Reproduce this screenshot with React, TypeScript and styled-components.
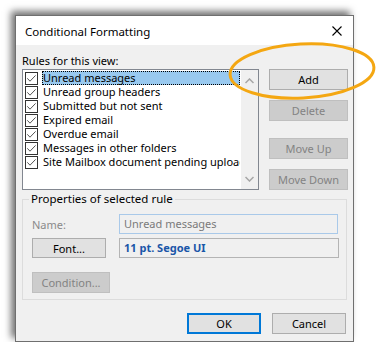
import styled, { createGlobalStyle } from "styled-components";

const GlobalStyle = createGlobalStyle`
  html, body {
    margin: 0;
    padding: 0;
    background: #ffffff;
  }
  body {
    font-family: "Noto Sans", "Open Sans", Arial, sans-serif;
    font-size: 11px;
    color: #000000;
  }
`;

const rules = [
  "Unread messages",
  "Unread group headers",
  "Submitted but not sent",
  "Expired email",
  "Overdue email",
  "Messages in other folders",
  "Site Mailbox document pending upload",
];

export default function App() {
  return (
    <Page>
      <GlobalStyle />
      <Dialog>
        <TitleBar>
          <Title>Conditional Formatting</Title>
          <CloseIcon viewBox="0 0 10 10">
            <path d="M0.5 0.5 L9.5 9.5 M9.5 0.5 L0.5 9.5" stroke="#000" strokeWidth="1.1" />
          </CloseIcon>
        </TitleBar>
        <Body>
          <TopArea>
            <ListColumn>
              <Label>Rules for this view:</Label>
              <ListBox>
                <Rows>
                  {rules.map((r, i) => (
                    <Row key={r}>
                      <CheckBox viewBox="0 0 13 13">
                        <rect x="0.5" y="0.5" width="12" height="12" fill="#fff" stroke="#333" />
                        <path d="M2.3 6.3 L5 9.2 L10.6 3.4" fill="none" stroke="#555" strokeWidth="1" />
                      </CheckBox>
                      <RowText $selected={i === 0}>{r}</RowText>
                    </Row>
                  ))}
                </Rows>
                <ScrollBar>
                  <Arrow viewBox="0 0 9 6">
                    <path d="M0.5 5 L4.5 1 L8.5 5" fill="none" stroke="#a6a6a6" strokeWidth="1.5" />
                  </Arrow>
                  <Arrow viewBox="0 0 9 6">
                    <path d="M0.5 1 L4.5 5 L8.5 1" fill="none" stroke="#a6a6a6" strokeWidth="1.5" />
                  </Arrow>
                </ScrollBar>
              </ListBox>
            </ListColumn>
            <ButtonColumn>
              <Button>Add</Button>
              <Button $disabled $mt={10}>Delete</Button>
              <Button $disabled $mt={17}>Move Up</Button>
              <Button $disabled $mt={10}>Move Down</Button>
            </ButtonColumn>
          </TopArea>
          <GroupBox>
            <Legend>Properties of selected rule</Legend>
            <FieldRow>
              <FieldLabel>Name:</FieldLabel>
              <NameInput>Unread messages</NameInput>
            </FieldRow>
            <FieldRow $mt={4}>
              <SmallButton>Font...</SmallButton>
              <FontBox>11 pt. Segoe UI</FontBox>
            </FieldRow>
            <ConditionButton $disabled>Condition...</ConditionButton>
          </GroupBox>
          <Footer>
            <OkButton>OK</OkButton>
            <FooterButton>Cancel</FooterButton>
          </Footer>
        </Body>
      </Dialog>
      <Highlight viewBox="0 0 378 342">
        <ellipse
          cx="302"
          cy="71"
          rx="72"
          ry="27"
          fill="none"
          stroke="#f4a712"
          strokeWidth="3"
          transform="rotate(-3 302 71)"
        />
      </Highlight>
    </Page>
  );
}

const Page = styled.div`
  position: relative;
  width: 378px;
  height: 342px;
  overflow: hidden;
  padding: 15px 0 0 15px;
  box-sizing: border-box;
`;

const Dialog = styled.div`
  width: 339px;
  height: 327px;
  box-sizing: border-box;
  border: 1px solid #6f6f6f;
  background: #f0f0f0;
  box-shadow: -4px -4px 7px rgba(0, 0, 0, 0.55);
  display: flex;
  flex-direction: column;
`;

const TitleBar = styled.div`
  height: 29px;
  background: #ffffff;
  display: flex;
  align-items: center;
  justify-content: space-between;
  padding: 0 11px 0 9px;
`;

const Title = styled.span`
  font-size: 11.5px;
  margin-top: 1px;
`;

const CloseIcon = styled.svg`
  width: 10px;
  height: 10px;
`;

const Body = styled.div`
  flex: 1;
  padding: 8px 7px 0 6px;
  display: flex;
  flex-direction: column;
`;

const TopArea = styled.div`
  display: flex;
  gap: 10px;
`;

const ListColumn = styled.div`
  display: flex;
  flex-direction: column;
`;

const Label = styled.div`
  height: 16px;
  line-height: 16px;
`;

const ListBox = styled.div`
  width: 237px;
  height: 121px;
  box-sizing: border-box;
  border: 1px solid #828790;
  background: #ffffff;
  display: flex;
`;

const Rows = styled.div`
  flex: 1;
  min-width: 0;
  padding: 1px 1px 0 2px;
  display: flex;
  flex-direction: column;
  overflow: hidden;
`;

const Row = styled.div`
  height: 14px;
  display: flex;
  align-items: center;
  gap: 4px;
  white-space: nowrap;
`;

const CheckBox = styled.svg`
  width: 13px;
  height: 13px;
  flex: none;
`;

const RowText = styled.span<{ $selected?: boolean }>`
  flex: 1;
  min-width: 0;
  height: 14px;
  line-height: 14px;
  padding-left: 1px;
  box-sizing: border-box;
  background: ${({ $selected }) => ($selected ? "#99c9ef" : "transparent")};
  outline: ${({ $selected }) => ($selected ? "1px dotted #000" : "none")};
  outline-offset: -1px;
  overflow: hidden;
`;

const ScrollBar = styled.div`
  width: 17px;
  flex: none;
  background: #f0f0f0;
  display: flex;
  flex-direction: column;
  justify-content: space-between;
  align-items: center;
  padding: 8px 0 7px;
`;

const Arrow = styled.svg`
  width: 9px;
  height: 6px;
`;

const ButtonColumn = styled.div`
  display: flex;
  flex-direction: column;
  padding-top: 16px;
`;

const Button = styled.div<{ $disabled?: boolean; $mt?: number }>`
  width: 79px;
  height: 21px;
  box-sizing: border-box;
  margin-top: ${({ $mt }) => $mt ?? 0}px;
  display: flex;
  align-items: center;
  justify-content: center;
  background: ${({ $disabled }) => ($disabled ? "#cccccc" : "#e1e1e1")};
  border: 1px solid ${({ $disabled }) => ($disabled ? "#bfbfbf" : "#adadad")};
  color: ${({ $disabled }) => ($disabled ? "#838383" : "#000")};
`;

const GroupBox = styled.div`
  position: relative;
  margin-top: 9px;
  width: 325px;
  height: 101px;
  box-sizing: border-box;
  border: 1px solid #dcdcdc;
  padding: 14px 0 0 9px;
`;

const Legend = styled.span`
  position: absolute;
  top: -9px;
  left: 6px;
  padding: 0 2px;
  background: #f0f0f0;
  line-height: 16px;
  font-size: 11.5px;
`;

const FieldRow = styled.div<{ $mt?: number }>`
  display: flex;
  align-items: center;
  margin-top: ${({ $mt }) => $mt ?? 0}px;
`;

const FieldLabel = styled.span`
  width: 87px;
  color: #8a8a8a;
`;

const NameInput = styled.div`
  width: 219px;
  height: 20px;
  box-sizing: border-box;
  border: 1px solid #a9c9e9;
  color: #7a7a7a;
  padding-left: 4px;
  line-height: 18px;
`;

const SmallButton = styled(Button)`
  width: 74px;
  height: 20px;
  margin-right: 13px;
`;

const FontBox = styled.div`
  width: 220px;
  height: 20px;
  box-sizing: border-box;
  border: 1px solid #b4b4b4;
  color: #1a56a8;
  font-weight: bold;
  padding-left: 4px;
  line-height: 18px;
`;

const ConditionButton = styled(Button)`
  width: 78px;
  margin-top: 14px;
`;

const Footer = styled.div`
  display: flex;
  justify-content: flex-end;
  gap: 11px;
  margin-top: 13px;
`;

const FooterButton = styled(Button)`
  width: 74px;
  height: 21px;
`;

const OkButton = styled(FooterButton)`
  border: 2px solid #0078d7;
`;

const Highlight = styled.svg`
  position: absolute;
  left: 0;
  top: 0;
  width: 378px;
  height: 342px;
  pointer-events: none;
`;
